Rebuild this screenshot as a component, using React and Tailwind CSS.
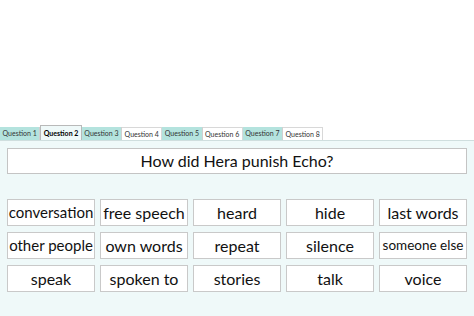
const tabs = ['Question 1', 'Question 2', 'Question 3', 'Question 4', 'Question 5', 'Question 6', 'Question 7', 'Question 8'];

const words = [
  'conversation', 'free speech', 'heard', 'hide', 'last words',
  'other people', 'own words', 'repeat', 'silence', 'someone else',
  'speak', 'spoken to', 'stories', 'talk', 'voice',
];

// long words get shrunk to fit their box
const sizes = {
  conversation: 'text-[15px]',
  'other people': 'text-[15px]',
  'someone else': 'text-[13.5px]',
};

function Tab({ label, index }) {
  const active = index === 1;
  const teal = index % 2 === 0;
  if (active) {
    return (
      <div className="-mb-px flex h-[16px] items-center border-x border-t border-[#b9b9b9] bg-[#eff9f9] px-[2.5px] text-[7px] font-bold text-black">
        {label}
      </div>
    );
  }
  return (
    <div className={`flex h-[13px] items-center border-r border-[#d0d0d0] px-[2.5px] text-[7px] text-[#333] ${teal ? 'bg-[#b4e3de]' : 'border-t border-[#d8d8d8] bg-white'}`}>
      {label}
    </div>
  );
}

export default function App() {
  return (
    <div className="flex h-[316px] w-[474px] flex-col bg-white font-['Lato',sans-serif]">
      <div className="h-[125px]" />
      <div className="flex h-[15px] items-end">
        {tabs.map((t, i) => <Tab key={t} label={t} index={i} />)}
      </div>
      <div className="flex-1 border-t border-[#cfdede] bg-[#eff9f9] px-[7px] pt-[7px]">
        <div className="flex h-[26px] items-center justify-center border border-[#c4c4c4] bg-white text-[16px] text-[#111]">
          How did Hera punish Echo?
        </div>
        <div className="mt-[25px] grid grid-cols-5 gap-x-[5px] gap-y-[6px]">
          {words.map((w) => (
            <div
              key={w}
              className={`flex h-[27px] items-center justify-center whitespace-nowrap border border-[#c9c9c9] bg-white text-[#111] ${sizes[w] || 'text-[16px]'}`}
            >
              {w}
            </div>
          ))}
        </div>
      </div>
    </div>
  );
}
